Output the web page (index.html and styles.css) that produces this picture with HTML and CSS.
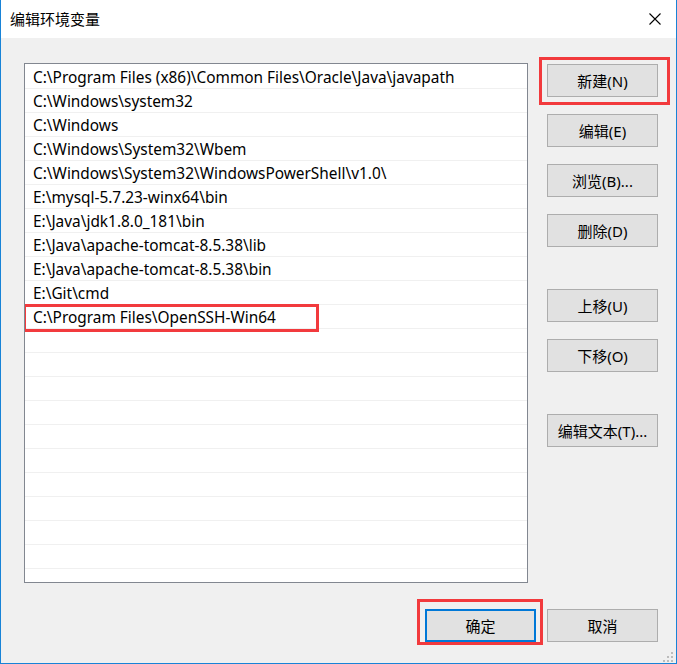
FILE: index.html
```html
<!DOCTYPE html>
<html lang="zh-CN">
<head>
<meta charset="utf-8">
<title>编辑环境变量</title>
<link rel="stylesheet" href="styles.css">
</head>
<body>
<div class="window">
  <div class="titlebar">
    <span class="title">编辑环境变量</span>
    <span class="close">
      <svg width="12" height="12" viewBox="0 0 12 12"><path d="M0.5 0.5 L11.5 11.5 M11.5 0.5 L0.5 11.5" stroke="#000" stroke-width="1.1" fill="none"/></svg>
    </span>
  </div>
  <div class="body">
    <div class="main">
      <div class="listbox">
        <div class="row">C:\Program Files (x86)\Common Files\Oracle\Java\javapath</div>
        <div class="row">C:\Windows\system32</div>
        <div class="row">C:\Windows</div>
        <div class="row">C:\Windows\System32\Wbem</div>
        <div class="row">C:\Windows\System32\WindowsPowerShell\v1.0\</div>
        <div class="row">E:\mysql-5.7.23-winx64\bin</div>
        <div class="row">E:\Java\jdk1.8.0_181\bin</div>
        <div class="row">E:\Java\apache-tomcat-8.5.38\lib</div>
        <div class="row">E:\Java\apache-tomcat-8.5.38\bin</div>
        <div class="row">E:\Git\cmd</div>
        <div class="row marked">C:\Program Files\OpenSSH-Win64</div>
        <div class="row"></div>
        <div class="row"></div>
        <div class="row"></div>
        <div class="row"></div>
        <div class="row"></div>
        <div class="row"></div>
        <div class="row"></div>
        <div class="row"></div>
        <div class="row"></div>
        <div class="row"></div>
        <div class="row"></div>
      </div>
      <div class="buttons">
        <div class="group">
          <button class="btn marked-btn">新建(N)</button>
          <button class="btn">编辑(E)</button>
          <button class="btn">浏览(B)...</button>
          <button class="btn">删除(D)</button>
        </div>
        <div class="group">
          <button class="btn">上移(U)</button>
          <button class="btn">下移(O)</button>
        </div>
        <div class="group">
          <button class="btn">编辑文本(T)...</button>
        </div>
      </div>
    </div>
    <div class="footer">
      <button class="btn primary marked-ok">确定</button>
      <button class="btn">取消</button>
    </div>
    <div class="grip">
      <i></i><i></i><i></i><i></i><i></i><i></i>
    </div>
  </div>
</div>
</body>
</html>
```
FILE: styles.css
```css
html, body {
  margin: 0;
  padding: 0;
  background: #fff;
}
.window {
  width: 677px;
  height: 664px;
  box-sizing: border-box;
  border-left: 1px solid #1883d7;
  border-right: 1px solid #1883d7;
  border-bottom: 1px solid #1883d7;
  display: flex;
  flex-direction: column;
  font-family: "Noto Sans", "Noto Sans CJK SC", sans-serif;
  color: #000;
}
.titlebar {
  height: 38px;
  flex: none;
  background: #fff;
  display: flex;
  align-items: center;
  justify-content: space-between;
  padding: 0 15px 0 9px;
}
.title {
  font-family: "Noto Sans CJK SC", sans-serif;
  font-size: 15px;
  line-height: 38px;
}
.close {
  display: flex;
  width: 12px;
  height: 12px;
}
.body {
  flex: 1;
  background: #f0f0f0;
  position: relative;
  display: flex;
  flex-direction: column;
  padding: 25px 18px 0 23px;
}
.main {
  display: flex;
  gap: 19px;
}
.listbox {
  width: 504px;
  height: 520px;
  box-sizing: border-box;
  border: 1px solid #828790;
  background: #fff;
  padding-top: 1px;
  overflow: hidden;
}
.row {
  height: 22px;
  padding-top: 1px;
  border-bottom: 1px solid #f0f0f0;
  padding-left: 8px;
  font-size: 15.4px;
  line-height: 23px;
  white-space: nowrap;
  position: relative;
  color: #000;
}
.row.marked::after {
  content: "";
  position: absolute;
  left: -2px;
  top: -1px;
  width: 296px;
  height: 28px;
  box-sizing: border-box;
  border: 3px solid #f23a3d;
}
.buttons {
  display: flex;
  flex-direction: column;
  gap: 42px;
  padding-top: 1px;
}
.group {
  display: flex;
  flex-direction: column;
  gap: 17px;
}
.btn {
  width: 111px;
  height: 33px;
  box-sizing: border-box;
  background: #e1e1e1;
  border: 1px solid #adadad;
  font-family: "Noto Sans", "Noto Sans CJK SC", sans-serif;
  font-size: 15px;
  color: #000;
  padding: 0;
  margin: 0;
  position: relative;
}
.btn.primary {
  border: 2px solid #0078d7;
}
.marked-btn::after {
  content: "";
  position: absolute;
  left: -9px;
  top: -8px;
  width: 131px;
  height: 48px;
  box-sizing: border-box;
  border: 3px solid #f23a3d;
}
.marked-ok::after {
  content: "";
  position: absolute;
  left: -10px;
  top: -12px;
  width: 126px;
  height: 46px;
  box-sizing: border-box;
  border: 3px solid #f23a3d;
}
.footer {
  display: flex;
  justify-content: flex-end;
  gap: 11px;
  margin-top: 26px;
}
.grip {
  position: absolute;
  right: 3px;
  bottom: 1px;
  width: 10px;
  height: 10px;
  display: grid;
  grid-template-columns: repeat(3, 2px);
  grid-template-rows: repeat(3, 2px);
  gap: 2px;
}
.grip i {
  width: 2px;
  height: 2px;
  background: #bcbcbc;
  display: block;
}
.grip i:nth-child(1) { grid-column: 3; grid-row: 1; }
.grip i:nth-child(2) { grid-column: 2; grid-row: 2; }
.grip i:nth-child(3) { grid-column: 3; grid-row: 2; }
.grip i:nth-child(4) { grid-column: 1; grid-row: 3; }
.grip i:nth-child(5) { grid-column: 2; grid-row: 3; }
.grip i:nth-child(6) { grid-column: 3; grid-row: 3; }
```
